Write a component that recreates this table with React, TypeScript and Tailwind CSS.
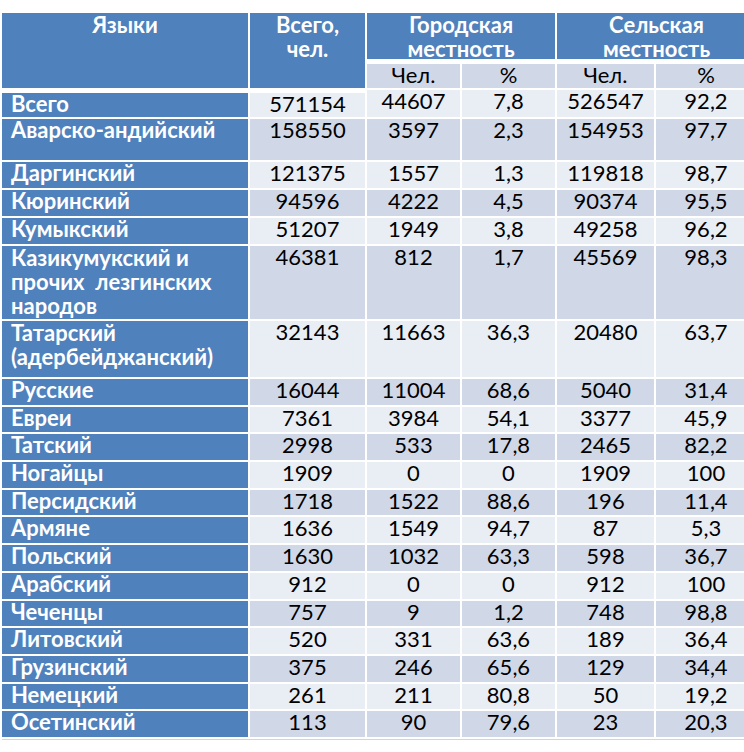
import React from "react";

const rows: string[][] = [
  ["Всего", "571154", "44607", "7,8", "526547", "92,2"],
  ["Аварско-андийский", "158550", "3597", "2,3", "154953", "97,7"],
  ["Даргинский", "121375", "1557", "1,3", "119818", "98,7"],
  ["Кюринский", "94596", "4222", "4,5", "90374", "95,5"],
  ["Кумыкский", "51207", "1949", "3,8", "49258", "96,2"],
  ["Казикумукский и|прочих  лезгинских|народов", "46381", "812", "1,7", "45569", "98,3"],
  ["Татарский|(адербейджанский)", "32143", "11663", "36,3", "20480", "63,7"],
  ["Русские", "16044", "11004", "68,6", "5040", "31,4"],
  ["Евреи", "7361", "3984", "54,1", "3377", "45,9"],
  ["Татский", "2998", "533", "17,8", "2465", "82,2"],
  ["Ногайцы", "1909", "0", "0", "1909", "100"],
  ["Персидский", "1718", "1522", "88,6", "196", "11,4"],
  ["Армяне", "1636", "1549", "94,7", "87", "5,3"],
  ["Польский", "1630", "1032", "63,3", "598", "36,7"],
  ["Арабский", "912", "0", "0", "912", "100"],
  ["Чеченцы", "757", "9", "1,2", "748", "98,8"],
  ["Литовский", "520", "331", "63,6", "189", "36,4"],
  ["Грузинский", "375", "246", "65,6", "129", "34,4"],
  ["Немецкий", "261", "211", "80,8", "50", "19,2"],
  ["Осетинский", "113", "90", "79,6", "23", "20,3"],
];

function Lines({ text }: { text: string }) {
  const parts = text.split("|");
  if (parts.length === 1) return <>{text}</>;
  return (
    <>
      {parts.map((p, i) => (
        <div key={i} className="h-[24px] leading-[24px] whitespace-pre">
          {p}
        </div>
      ))}
    </>
  );
}

const head = "bg-[#4f81bd] text-white font-bold text-center";

export default function App() {
  return (
    <div className="w-[744px] h-[752px] overflow-hidden bg-white pt-[13px] pl-[2px] font-[Lato,'Noto_Sans',sans-serif] text-[22px] leading-[22px] text-black">
      <div className="grid w-max grid-cols-[246px_115px_93px_93px_97px_100px] grid-rows-[49px_24px_27px_41px_26px_26px_26px_73px_56px_repeat(13,25.7px)] gap-[2px] bg-white">
        {/* header */}
        <div className={`row-span-2 ${head} leading-[24px]`}>Языки</div>
        <div className={`row-span-2 ${head}`}>
          <Lines text="Всего,|чел." />
        </div>
        <div className={`col-span-2 ${head} border-b-[3px] border-white`}>
          <Lines text="Городская|местность" />
        </div>
        <div className={`col-span-2 ${head} border-b-[3px] border-white`}>
          <Lines text="Сельская|местность" />
        </div>
        <div className="bg-[#d0d8e8] text-center">Чел.</div>
        <div className="bg-[#d0d8e8] text-center">%</div>
        <div className="bg-[#d0d8e8] text-center">Чел.</div>
        <div className="bg-[#d0d8e8] text-center">%</div>

        {rows.map((r, i) => {
          const band = i % 2 === 0 ? "bg-[#e9edf4]" : "bg-[#d0d8e8]";
          const first = i === 0 ? "border-t-[3px] border-white" : "";
          return (
            <React.Fragment key={i}>
              <div className={`bg-[#4f81bd] text-white font-bold pl-[9px] ${first}`}>
                <Lines text={r[0]} />
              </div>
              <div className={`${band} text-center ${first}`}>{r[1]}</div>
              <div className={`${band} text-center`}>{r[2]}</div>
              <div className={`${band} text-center`}>{r[3]}</div>
              <div className={`${band} text-center`}>{r[4]}</div>
              <div className={`${band} text-center`}>{r[5]}</div>
            </React.Fragment>
          );
        })}
      </div>
      <div className="mt-[2px] h-px w-[760px] bg-[#d4d4d4]" />
    </div>
  );
}
